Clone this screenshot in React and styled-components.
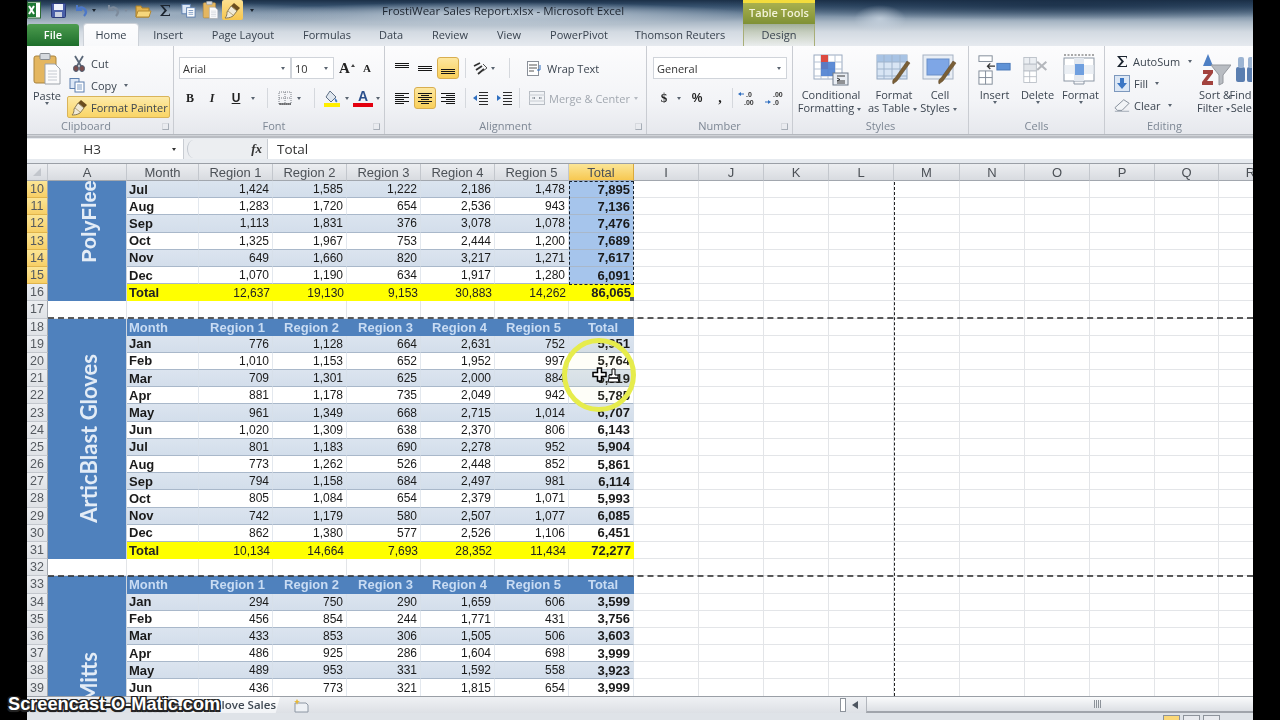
import React from "react";
import styled, { createGlobalStyle } from "styled-components";

const uiFont = `"Open Sans", "Noto Sans", "Liberation Sans", sans-serif`;
const cellFont = `"Liberation Sans", Arial, sans-serif`;

const GlobalStyle = createGlobalStyle`
  html, body { margin: 0; padding: 0; background: #000; overflow: hidden; }
  * { box-sizing: border-box; }
`;

const Page = styled.div`
  position: relative;
  width: 1280px;
  height: 720px;
  background: #000;
  overflow: hidden;
`;

const ExcelWindow = styled.div`
  position: relative;
  width: 1226px;
  height: 720px;
  margin-left: 27px;
  display: flex;
  flex-direction: column;
  overflow: hidden;
  filter: blur(0.35px);
  background:
    radial-gradient(ellipse 26px 14px at 853px 19px, rgba(205, 216, 228, 0.75), transparent),
    radial-gradient(ellipse 250px 12px at 470px 14px, rgba(214, 223, 232, 0.8), transparent),
    radial-gradient(ellipse 190px 11px at 140px 13px, rgba(196, 209, 222, 0.55), transparent),
    radial-gradient(ellipse 360px 15px at 1030px 5px, rgba(24, 44, 68, 0.75), transparent),
    linear-gradient(180deg, #1b2f47 0, #35506d 6px, #6f869d 14px, #a9b7c5 22px, #d3dae2 32px, #e6eaef 46px);
`;

const TitleBar = styled.div`
  height: 24px;
  display: flex;
  align-items: flex-start;
  flex-shrink: 0;
`;

const QuickAccess = styled.div`
  display: flex;
  align-items: center;
  width: 355px;
  height: 20px;
`;

const QuickButton = styled.span`
  display: flex;
  align-items: center;
  justify-content: center;
  height: 20px;
  width: ${(p) => p.$w || 16}px;
  margin-left: ${(p) => p.$ml || 0}px;
  flex-shrink: 0;
  ${(p) => p.$on && "background: linear-gradient(#fbdf8f, #f7c64e); border-radius: 2px;"}
`;

const WindowTitle = styled.div`
  width: 361px;
  padding-top: 3px;
  font: 11.5px ${uiFont};
  color: #1d2530;
  white-space: nowrap;
`;

const ContextTab = styled.div`
  width: 72px;
  height: 24px;
  border-top: 3px solid #f4dc3c;
  background: linear-gradient(#a9b04e, #7f9135);
  color: #f3f3d8;
  font: 600 11px/20px ${uiFont};
  text-align: center;
`;

const TabRow = styled.div`
  height: 22px;
  display: flex;
  flex-shrink: 0;
`;

const Tab = styled.div`
  width: ${(p) => p.$w}px;
  margin-left: ${(p) => p.$ml || 0}px;
  font: 11px/22px ${uiFont};
  color: #39434f;
  text-align: center;
`;

const FileTab = styled(Tab)`
  background: linear-gradient(#4d9c4f, #1d6e2b);
  color: #fff;
  font-weight: 600;
  border-radius: 3px 3px 0 0;
`;

const HomeTab = styled(Tab)`
  background: linear-gradient(#fdfdfe, #f8f9fb);
  border-radius: 3px 3px 0 0;
  box-shadow: 0 0 0 1px #ccd1d8;
`;

const DesignTab = styled(Tab)`
  background: linear-gradient(rgba(130, 145, 60, 0.35), rgba(240, 242, 235, 0.4));
  border-left: 1px solid #a8ae78;
  border-right: 1px solid #a8ae78;
`;

const Ribbon = styled.div`
  height: 89px;
  display: flex;
  flex-shrink: 0;
  background: linear-gradient(#fcfcfd, #f3f4f7 62%, #e6e8ed);
  border-bottom: 1px solid #b4b8be;
  box-shadow: 0 1px 0 #d0d3d8, 0 3px 0 #b9bcc2;
`;

const Group = styled.div`
  position: relative;
  width: ${(p) => p.$w}px;
  flex-shrink: 0;
  display: flex;
  flex-direction: column;
  border-right: 1px solid ${(p) => (p.$last ? "transparent" : "#c9ccd2")};
  overflow: hidden;
`;

const GroupBody = styled.div`
  height: 72px;
  display: flex;
  padding-left: ${(p) => p.$pl || 0}px;
  padding-top: ${(p) => p.$pt ?? 8}px;
  gap: ${(p) => p.$gap || 0}px;
`;

const GroupLabel = styled.div`
  font: 11px/16px ${uiFont};
  color: #7d8794;
  text-align: center;
  padding-right: ${(p) => p.$pr || 0}px;
`;

const Launcher = styled.span`
  position: absolute;
  right: 4px;
  bottom: 4px;
  width: 7px;
  height: 7px;
  border: 1px solid #a6adb6;
  border-top-color: #d6d9de;
  border-left-color: #d6d9de;
`;

const BigButton = styled.div`
  width: ${(p) => p.$w}px;
  display: flex;
  flex-direction: column;
  align-items: center;
  font: 11px/13px ${uiFont};
  color: #3c4550;
  text-align: center;
  white-space: nowrap;
  flex-shrink: 0;
`;

const BigIcon = styled.div`
  height: 33px;
  margin-bottom: 2px;
  margin-top: ${(p) => p.$mt || 0}px;
  display: flex;
  align-items: flex-end;
  justify-content: center;
`;

const PasteLabel = styled.span`
  margin-top: 2px;
`;

const Caret = styled.span`
  display: inline-block;
  width: 0;
  height: 0;
  margin: 0 ${(p) => p.$m ?? 3}px;
  vertical-align: middle;
  flex-shrink: 0;
  border-left: 2.5px solid transparent;
  border-right: 2.5px solid transparent;
  border-top: 3px solid ${(p) => p.$c || "#5a6470"};
`;

const UpCaret = styled.span`
  width: 0;
  height: 0;
  margin: -6px 0 0 1px;
  border-left: 2px solid transparent;
  border-right: 2px solid transparent;
  border-bottom: 3px solid #444;
`;

const SmallColumn = styled.div`
  display: flex;
  flex-direction: column;
  flex-shrink: 0;
  width: ${(p) => p.$w}px;
`;

const SmallButton = styled.div`
  height: 22px;
  display: flex;
  align-items: center;
  gap: ${(p) => p.$gap ?? 4}px;
  padding-left: ${(p) => p.$pl ?? 2}px;
  font: 11px ${uiFont};
  color: ${(p) => (p.$off ? "#a2a8b0" : "#3c4550")};
  white-space: nowrap;
  ${(p) =>
    p.$on &&
    "background: linear-gradient(#fdeaa8, #fad566); border: 1px solid #d9b45a; border-radius: 2px;"}
`;

const StackRows = styled.div`
  display: flex;
  flex-direction: column;
  gap: ${(p) => p.$gap ?? 8}px;
`;

const ToolRow = styled.div`
  display: flex;
  align-items: center;
  height: 22px;
  gap: ${(p) => p.$gap || 0}px;
`;

const Combo = styled.div`
  width: ${(p) => p.$w}px;
  height: 22px;
  flex-shrink: 0;
  background: #fff;
  border: 1px solid #d0d4da;
  display: flex;
  align-items: center;
  justify-content: space-between;
  padding: 0 2px 0 3px;
  font: 11px ${uiFont};
  color: #333;
`;

const ToolIcon = styled.span`
  display: flex;
  align-items: center;
  justify-content: center;
  width: ${(p) => p.$w || 22}px;
  height: 22px;
  font: ${(p) => p.$font || "700 12px 'Liberation Serif', serif"};
  color: #222;
  flex-shrink: 0;
  ${(p) =>
    p.$on &&
    "background: linear-gradient(#fde7a0, #f9cf5a); border: 1px solid #d8ae50; border-radius: 3px;"}
`;

const UnderlineIcon = styled(ToolIcon)`
  text-decoration: underline;
`;

const FontColorIcon = styled(ToolIcon)`
  color: #2b4f8c;
  height: 17px;
  border-bottom: 4px solid #e3000f;
`;

const RowDivider = styled.span`
  width: 1px;
  height: 20px;
  background: #d5d8dd;
  margin: 0 ${(p) => p.$m ?? 6}px;
  flex-shrink: 0;
`;

const FormulaBar = styled.div`
  height: 20px;
  margin-top: 4px;
  display: flex;
  flex-shrink: 0;
  background: #fff;
  font: 13.5px/20px ${uiFont};
  color: #333;
`;

const NameBox = styled.div`
  width: 156px;
  display: flex;
  align-items: center;
  justify-content: flex-end;
  gap: 68px;
  padding-right: 4px;
`;

const FormulaButtons = styled.div`
  width: 85px;
  display: flex;
  align-items: center;
  justify-content: space-between;
  padding: 0 5px 0 3px;
  background: #eceef1;
  border-right: 1px solid #c8ccd2;
  border-left: 1px solid #c8ccd2;
  font: italic 700 13px "Liberation Serif", serif;
`;

const RoundCap = styled.span`
  width: 12px;
  height: 18px;
  border-left: 1.5px solid #c4c9d0;
  border-radius: 50%;
`;

const FormulaText = styled.div`
  padding-left: 9px;
`;

const SheetArea = styled.div`
  position: relative;
  margin-top: 4px;
  height: 533px;
  flex-shrink: 0;
  overflow: hidden;
  background: #fff;
  border-top: 1px solid #9a9fa6;
`;

const Grid = styled.div`
  display: grid;
  grid-template-columns: 21px 79px 72px repeat(5, 74px) repeat(5, 65px) 66px 65px 65px 65px 64px 64px;
  grid-template-rows: 17px repeat(30, 17.2px);
  font: 12px ${cellFont};
  color: #111;
`;

const ColHead = styled.div`
  display: flex;
  align-items: center;
  justify-content: center;
  font: 13px ${cellFont};
  color: #4c5157;
  background: ${(p) =>
    p.$active
      ? "linear-gradient(#fbe596, #f7c851)"
      : "linear-gradient(#eceef1, #d8dbe0)"};
  border-right: 1px solid ${(p) => (p.$active ? "#d9a93c" : "#c3c7cd")};
  border-bottom: 1px solid #a2a7ae;
`;

const RowHead = styled.div`
  display: flex;
  align-items: center;
  justify-content: center;
  font: 12.5px ${cellFont};
  color: #555a60;
  background: ${(p) =>
    p.$active
      ? "linear-gradient(#fbe596, #f7cf66)"
      : "linear-gradient(#eceef1, #dfe2e6)"};
  border-bottom: 1px solid ${(p) => (p.$active ? "#e0b44c" : "#c3c7cd")};
  border-right: 1px solid #a2a7ae;
`;

const Band = styled.div`
  grid-row: span ${(p) => p.$span};
  background: #4f81bd;
  color: #e3ecf6;
  overflow: hidden;
  display: flex;
  flex-direction: column;
  align-items: center;
  justify-content: ${(p) => p.$justify || "center"};
  padding-top: ${(p) => p.$pt || 0}px;
  padding-bottom: ${(p) => p.$pb || 0}px;
  padding-left: 3px;
  border-right: 1px solid #cfd6df;
`;

const BandText = styled.span`
  writing-mode: vertical-rl;
  transform: rotate(180deg);
  white-space: nowrap;
  font: 700 ${(p) => p.$size}px/1 ${(p) => p.$font};
  flex-shrink: 0;
`;

const Cell = styled.div`
  display: flex;
  align-items: center;
  justify-content: ${(p) => (p.$left ? "flex-start" : "flex-end")};
  padding: ${(p) => (p.$left ? "0 0 0 2px" : "0 3px 0 0")};
  white-space: nowrap;
  border-right: 1px solid #e3e5e8;
  border-bottom: 1px solid #e3e5e8;
  font-size: ${(p) => (p.$strong ? "13px" : "12px")};
  font-weight: ${(p) => (p.$strong ? 700 : 400)};
`;

const DataCell = styled(Cell)`
  background: ${(p) =>
    p.$selected ? "#a6c5ec" : p.$shaded ? "linear-gradient(#dbe4ef, #d3deeb)" : "#fff"};
  border-bottom: 1px solid #a9b8ca;
  border-right: 1px solid ${(p) => (p.$shaded ? "#d7e0ea" : "#e3e8ee")};
  color: #1a1a1a;
`;

const HeaderCell = styled(Cell)`
  background: #4f81bd;
  color: #c9dcf3;
  font-size: 13px;
  font-weight: 700;
  padding-right: ${(p) => p.$pr || 8}px;
  border: 0;
`;

const TotalCell = styled(Cell)`
  background: #ffff00;
  border-right: 0;
  border-bottom: 0;
  color: #222;
  font-size: ${(p) => (p.$strong ? "13px" : "12px")};
`;

const PageBreakH = styled.div`
  position: absolute;
  left: 21px;
  right: 0;
  top: ${(p) => p.$top}px;
  border-top: 2px dashed #333;
  opacity: 0.8;
`;

const PageBreakV = styled.div`
  position: absolute;
  left: 867px;
  top: 18px;
  bottom: 0;
  border-left: 1.5px dashed #222;
`;

const MarchingAnts = styled.div`
  position: absolute;
  left: 542px;
  top: 17px;
  width: 65px;
  height: 104px;
  border: 1.5px dashed #14202e;
`;

const FillHandle = styled.span`
  position: absolute;
  left: 603px;
  top: 133px;
  width: 4px;
  height: 4px;
  background: #55606c;
`;

const Highlight = styled.div`
  position: absolute;
  left: 535px;
  top: 174px;
  width: 74px;
  height: 74px;
  border: 5px solid #e6ec4c;
  border-radius: 50%;
  background: rgba(240, 240, 130, 0.06);
`;

const CursorMark = styled.svg`
  position: absolute;
  left: 565px;
  top: 203px;
`;

const SheetBar = styled.div`
  height: 17px;
  flex-shrink: 0;
  display: flex;
  align-items: stretch;
  background: linear-gradient(#eff1f4, #dde0e5);
  border-top: 1px solid #9a9fa6;
`;

const SheetNav = styled.div`
  width: 145px;
`;

const SheetTab = styled.div`
  width: 108px;
  background: linear-gradient(#fff, #f1f3f6);
  font: 600 11.5px/15px ${uiFont};
  color: #3f4852;
  text-align: right;
  padding-right: 4px;
  clip-path: polygon(0 0, 100% 0, 96% 100%, 4% 100%);
`;

const NewSheetTab = styled.div`
  width: 40px;
  display: flex;
  align-items: center;
  justify-content: center;
`;

const SheetSpacer = styled.div`
  width: 520px;
`;

const SplitHandle = styled.span`
  width: 6px;
  margin: 1px 6px 1px 0;
  background: #fff;
  border: 1px solid #8d939b;
`;

const ScrollArrow = styled.span`
  width: 0;
  height: 0;
  align-self: center;
  margin-right: 8px;
  border-top: 4px solid transparent;
  border-bottom: 4px solid transparent;
  border-right: 6px solid #4d5560;
`;

const ScrollTrack = styled.div`
  flex: 1;
  display: flex;
  align-items: center;
  justify-content: center;
  padding-left: 76px;
  background: linear-gradient(#fafbfc, #dcdfe4);
  border-left: 1px solid #b2b6bd;
  border-bottom: 2px solid #a0a4ab;
`;

const ScrollGrip = styled.span`
  width: 8px;
  height: 8px;
  background: repeating-linear-gradient(90deg, #8c9299 0 1px, transparent 1px 2px);
`;

const StatusBar = styled.div`
  flex: 1;
  display: flex;
  justify-content: flex-end;
  align-items: flex-start;
  gap: 3px;
  padding: 2px 33px 0 0;
  background: #dfe3e8;
`;

const ViewButton = styled.span`
  width: 17px;
  height: 5px;
  border: 1px solid #8d939b;
  border-bottom: 0;
  background: ${(p) => (p.$on ? "#fbd878" : "#e8eaee")};
`;

const Watermark = styled.div`
  position: absolute;
  left: 8px;
  bottom: 5px;
  font: 700 18.2px ${cellFont};
  color: #fff;
  white-space: nowrap;
  text-shadow: -1.5px -1.5px 0 #222, 1.5px -1.5px 0 #222, -1.5px 1.5px 0 #222, 1.5px 1.5px 0 #222, 0 2px 1px #222;
`;

const ExcelLogo = () => (
  <svg width="14" height="18" viewBox="0 0 14 18">
    <rect x="0.5" y="1" width="13" height="16" fill="#fff" stroke="#2d6a35" />
    <rect x="1" y="2" width="8" height="14" fill="#1f7a35" />
    <path d="M2 5l5 8M7 5l-5 8" stroke="#fff" strokeWidth="2" />
  </svg>
);

const SaveIcon = () => (
  <svg width="15" height="15" viewBox="0 0 15 15">
    <rect x="0.5" y="0.5" width="14" height="14" rx="1" fill="#4a5fa8" stroke="#2b3a78" />
    <rect x="3" y="1" width="9" height="6" fill="#eef2fb" />
    <rect x="4" y="9" width="7" height="5" fill="#c9cfe0" />
  </svg>
);

const UndoIcon = ({ color }) => (
  <svg width="15" height="14" viewBox="0 0 15 14" fill="none">
    <path d="M4 2v5h5" stroke={color} strokeWidth="2" />
    <path d="M4.5 6.5C7 3 12 4 13 9c0 2-1 3-2 4" stroke={color} strokeWidth="2.4" />
  </svg>
);

const FolderIcon = () => (
  <svg width="17" height="15" viewBox="0 0 17 15">
    <path d="M1 3h5l1 2h7v9H1z" fill="#e2b34f" stroke="#a57c28" />
    <path d="M3 8h13l-2 6H1z" fill="#f6d67c" stroke="#b58a32" />
  </svg>
);

const SigmaGlyph = () => (
  <svg width="12" height="13" viewBox="0 0 12 13">
    <path d="M1 1h10v3l-1-2H4l4 4.500-4 4.500h6l1-2v3H1l4.500-5.500z" fill="#1c2530" />
  </svg>
);

const CopyIcon = ({ size = 16 }) => (
  <svg width={size} height={size} viewBox="0 0 16 16">
    <rect x="1" y="1.500" width="9" height="10" fill="#dce7f6" stroke="#5d7fae" />
    <rect x="6" y="5" width="9" height="10" fill="#fff" stroke="#5d7fae" />
    <path d="M8 8h5M8 10h5M8 12h5" stroke="#7f9cc4" />
  </svg>
);

const ClipboardIcon = ({ w = 18, h = 18 }) => (
  <svg width={w} height={h} viewBox="0 0 28 32">
    <rect x="1" y="3" width="22" height="27" rx="2" fill="#e4b660" stroke="#a8823c" />
    <rect x="7" y="0.500" width="10" height="6" rx="1" fill="#d5d9de" stroke="#878c92" />
    <path d="M12 11h10l5 5v15H12z" fill="#fbfbfc" stroke="#9da3ab" />
    <path d="M15 18h9M15 21h9M15 24h9M15 27h9" stroke="#c5cad1" />
  </svg>
);

const BrushIcon = () => (
  <svg width="17" height="17" viewBox="0 0 17 17">
    <path d="M10 1l6 5-3 3-6-5z" fill="#6b4d1e" />
    <path d="M7 4l6 5-4 5C6 16 3 16 1 16c2-2 2-4 2-6z" fill="#f0ead8" stroke="#8a7a55" />
    <path d="M4 9l5 4" stroke="#b9a777" />
  </svg>
);

const ScissorsIcon = () => (
  <svg width="14" height="17" viewBox="0 0 14 17" fill="none">
    <path d="M3 1l6 10M11 1L5 11" stroke="#5a6778" strokeWidth="1.800" />
    <ellipse cx="4" cy="13.500" rx="2.500" ry="3" fill="#7a4d4d" stroke="#4d5c70" />
    <ellipse cx="10" cy="13.500" rx="2.500" ry="3" fill="#7a4d4d" stroke="#4d5c70" />
  </svg>
);

const LinesIcon = ({ rows }) => (
  <svg width="16" height="14" viewBox="0 0 16 14" stroke="#161616" strokeWidth="1">
    {rows.map(([a, b, y]) => (
      <path key={y} d={`M${a} ${y + 0.5}H${b}`} />
    ))}
  </svg>
);

const alignLeft = [[1, 15, 2], [1, 10, 4], [1, 15, 6], [1, 10, 8], [1, 15, 10], [1, 10, 12]];
const alignCenter = [[1, 15, 2], [4, 12, 4], [1, 15, 6], [4, 12, 8], [1, 15, 10], [4, 12, 12]];
const alignRight = [[1, 15, 2], [6, 15, 4], [1, 15, 6], [6, 15, 8], [1, 15, 10], [6, 15, 12]];
const valignTop = [[1, 15, 2], [1, 15, 4], [1, 15, 6]];
const valignMid = [[1, 15, 5], [1, 15, 7], [1, 15, 9]];
const valignBottom = [[1, 15, 8], [1, 15, 10], [1, 15, 12]];

const IndentIcon = ({ flip }) => (
  <svg width="17" height="14" viewBox="0 0 17 14">
    <path d="M7 1.500h9M7 4.500h9M7 7.500h9M7 10.500h9M7 13.500h9" stroke="#2b2b2b" />
    <path d={flip ? "M1 4l4 3-4 3z" : "M5 4L1 7l4 3z"} fill="#2f6fc0" />
  </svg>
);

const BorderIcon = () => (
  <svg width="14" height="14" viewBox="0 0 14 14" fill="none" stroke="#7a7f86" strokeDasharray="1 1">
    <rect x="1" y="1" width="12" height="12" />
    <path d="M7 1v12M1 7h12" />
    <path d="M1 13h12" strokeDasharray="none" stroke="#222" />
  </svg>
);

const FillIcon = () => (
  <svg width="18" height="17" viewBox="0 0 18 17">
    <path d="M7 1l6 6-5 5-5-5z" fill="#dfe6ee" stroke="#5f6f85" />
    <path d="M12 8c2 2 3 3 2 4s-3-1-2-4z" fill="#4c7fc0" />
    <rect x="1" y="13" width="16" height="4" fill="#ffee00" />
  </svg>
);

const OrientIcon = () => (
  <svg width="17" height="14" viewBox="0 0 17 14" fill="none">
    <path d="M2 5l6-3M4 9l6-4M6 13l6-5" stroke="#333" strokeWidth="1.800" />
    <path d="M11 3l4 4-4 3" stroke="#555" />
  </svg>
);

const WrapIcon = () => (
  <svg width="16" height="15" viewBox="0 0 16 15" fill="none">
    <rect x="0.500" y="0.500" width="11" height="14" fill="#fff" stroke="#8a9099" />
    <path d="M2 4h8M2 7h8M2 10h5" stroke="#555" />
    <path d="M13 4v5h-3" stroke="#2f6fc0" />
  </svg>
);

const MergeIcon = () => (
  <svg width="16" height="14" viewBox="0 0 16 14" fill="none">
    <rect x="0.500" y="0.500" width="15" height="13" fill="#f1f3f6" stroke="#b7bcc3" />
    <path d="M0 4h16M0 10h16" stroke="#c8ccd2" />
    <path d="M3 7h3M13 7h-3M5 6l1 1-1 1M11 6l-1 1 1 1" stroke="#8d949d" />
  </svg>
);

const DecimalIcon = ({ top, bottom, up }) => (
  <svg width="22" height="16" viewBox="0 0 22 16" fontFamily="Liberation Sans" fontSize="7" fontWeight="700" fill="#333">
    <text x="9" y="7">{top}</text>
    <text x={up ? 7 : 9} y="15">{bottom}</text>
    <path d={up ? "M1 4l3-2v1.500h3v1H4V6z" : "M7 12l-3-2v1.500H1v1h3V14z"} fill="#2f6fc0" />
  </svg>
);

const TableGlyph = ({ children, w = 36, h = 32 }) => (
  <svg width={w} height={h} viewBox="0 0 36 32" fill="none">
    {children}
  </svg>
);

const gridLines = (
  <path d="M1 8h30M1 15h30M1 22h30M8 1v24M16 1v24M24 1v24" stroke="#9fb4cd" />
);

const FormatTableIcon = () => (
  <TableGlyph>
    <rect x="1" y="1" width="30" height="24" fill="#d8e5f4" stroke="#92a7c2" />
    <rect x="1" y="1" width="30" height="7" fill="#a8c3e4" />
    {gridLines}
    <path d="M34 9L21 27l-4 3c-1-3 0-5 2-6L31 7z" fill="#7a5f36" stroke="#5a4526" strokeWidth="0.500" />
  </TableGlyph>
);

const CellStylesIcon = () => (
  <TableGlyph>
    <rect x="1" y="1" width="30" height="24" fill="#e9eef5" stroke="#a5b2c3" />
    <rect x="5" y="5" width="22" height="16" fill="#7ea6e6" stroke="#6a8fc9" />
    <path d="M34 9L21 27l-4 3c-1-3 0-5 2-6L31 7z" fill="#7a5f36" stroke="#5a4526" strokeWidth="0.500" />
  </TableGlyph>
);

const CondFormatIcon = () => (
  <TableGlyph>
    <rect x="1" y="1" width="28" height="24" fill="#fff" stroke="#9aaac0" />
    <path d="M1 8h28M1 15h28M1 22h28M8 1v24M15 1v24M22 1v24" stroke="#b5c2d4" />
    <rect x="8" y="1" width="7" height="14" fill="#dc4a40" />
    <rect x="8" y="8" width="14" height="14" fill="#4d7fd0" opacity="0.9" />
    <rect x="8" y="1" width="7" height="7" fill="#dc4a40" />
    <rect x="20" y="19" width="15" height="12" fill="#e9edf3" stroke="#6e7a89" />
    <path d="M24 22h8M24 24l3 1.500-3 1.500h8M24 29h8" stroke="#222" fill="none" strokeWidth="0.900" />
  </TableGlyph>
);

const InsertCellsIcon = () => (
  <TableGlyph w={34}>
    <rect x="1" y="1" width="14" height="6" fill="#fff" stroke="#7f8a97" />
    <rect x="1" y="17" width="14" height="14" fill="#fff" stroke="#7f8a97" />
    <path d="M8 17v14M1 24h14" stroke="#7f8a97" />
    <rect x="20" y="9" width="14" height="7" fill="#5f92d6" stroke="#4a78b8" />
    <path d="M18 12H10m3-3l-3 3 3 3" stroke="#333" strokeWidth="1.300" />
  </TableGlyph>
);

const DeleteCellsIcon = () => (
  <TableGlyph w={30}>
    <rect x="1" y="1" width="15" height="8" fill="#eceff3" stroke="#b5bbc3" />
    <rect x="1" y="17" width="15" height="14" fill="#fff" stroke="#b5bbc3" />
    <path d="M8 1v8M8 17v14M1 24h15" stroke="#b5bbc3" />
    <rect x="1" y="9" width="15" height="8" fill="#e2e5e9" stroke="#b5bbc3" />
    <path d="M17 6l11 10m0-10L17 16" stroke="#b4b7bc" strokeWidth="2.500" />
  </TableGlyph>
);

const FormatCellsIcon = () => (
  <TableGlyph>
    <rect x="1" y="4" width="30" height="23" fill="#fff" stroke="#8c97a5" />
    <path d="M1 1h30" stroke="#555" strokeDasharray="2 1.500" />
    <rect x="11" y="4" width="10" height="23" fill="#e3e8ef" />
    <rect x="1" y="11" width="30" height="9" fill="#e3e8ef" opacity="0.7" />
    <rect x="12" y="10" width="9" height="11" fill="#6f9fdf" />
    <path d="M11 27v3h10v-3" stroke="#8c97a5" />
  </TableGlyph>
);

const SortIcon = () => (
  <svg width="32" height="33" viewBox="0 0 32 33">
    <path d="M9 1l5 12H4z" fill="#4d7fc4" />
    <path d="M4 17h10v3l-6 8h6v4H3v-3l6-8H4z" fill="#a2423e" />
    <path d="M12 12h20L24 22v8l-4 2V22z" fill="#b8bcc2" stroke="#94989e" />
  </svg>
);

const FindIcon = () => (
  <svg width="24" height="33" viewBox="0 0 24 33">
    <rect x="2" y="14" width="9" height="15" rx="2" fill="#5a7eb0" />
    <rect x="13" y="14" width="9" height="15" rx="2" fill="#5a7eb0" />
    <rect x="4" y="4" width="6" height="11" rx="2" fill="#9cb4d2" />
    <rect x="14" y="4" width="6" height="11" rx="2" fill="#9cb4d2" />
  </svg>
);

const FillDownIcon = () => (
  <svg width="16" height="17" viewBox="0 0 16 17">
    <rect x="0.500" y="0.500" width="15" height="16" fill="#dce7f5" stroke="#7d98bd" />
    <path d="M6 3h4v5h3l-5 6-5-6h3z" fill="#3b76c4" />
  </svg>
);

const EraserIcon = () => (
  <svg width="16" height="15" viewBox="0 0 18 15" fill="none">
    <path d="M11 1l6 4-8 8H4L1 10z" fill="#f2f4f7" stroke="#7b8592" />
    <path d="M1 14h16" stroke="#9aa3ae" />
  </svg>
);

const NewSheetIcon = () => (
  <svg width="17" height="15" viewBox="0 0 17 15">
    <path d="M3 5h11l2 2v7H3z" fill="#eef1f5" stroke="#8c96a3" />
    <path d="M5 1l1 2 2 .500-2 .800L5 7 4 4.300 2 3.500 4 3z" fill="#e8b834" />
  </svg>
);

const columns = ["A", "Month", "Region 1", "Region 2", "Region 3", "Region 4", "Region 5", "Total", "I", "J", "K", "L", "M", "N", "O", "P", "Q", "R"];

const polyFleece = [
  ["Jul", "1,424", "1,585", "1,222", "2,186", "1,478", "7,895"],
  ["Aug", "1,283", "1,720", "654", "2,536", "943", "7,136"],
  ["Sep", "1,113", "1,831", "376", "3,078", "1,078", "7,476"],
  ["Oct", "1,325", "1,967", "753", "2,444", "1,200", "7,689"],
  ["Nov", "649", "1,660", "820", "3,217", "1,271", "7,617"],
  ["Dec", "1,070", "1,190", "634", "1,917", "1,280", "6,091"],
];

const gloves = [
  ["Jan", "776", "1,128", "664", "2,631", "752", "5,951"],
  ["Feb", "1,010", "1,153", "652", "1,952", "997", "5,764"],
  ["Mar", "709", "1,301", "625", "2,000", "884", "5,519"],
  ["Apr", "881", "1,178", "735", "2,049", "942", "5,785"],
  ["May", "961", "1,349", "668", "2,715", "1,014", "6,707"],
  ["Jun", "1,020", "1,309", "638", "2,370", "806", "6,143"],
  ["Jul", "801", "1,183", "690", "2,278", "952", "5,904"],
  ["Aug", "773", "1,262", "526", "2,448", "852", "5,861"],
  ["Sep", "794", "1,158", "684", "2,497", "981", "6,114"],
  ["Oct", "805", "1,084", "654", "2,379", "1,071", "5,993"],
  ["Nov", "742", "1,179", "580", "2,507", "1,077", "6,085"],
  ["Dec", "862", "1,380", "577", "2,526", "1,106", "6,451"],
];

const mitts = [
  ["Jan", "294", "750", "290", "1,659", "606", "3,599"],
  ["Feb", "456", "854", "244", "1,771", "431", "3,756"],
  ["Mar", "433", "853", "306", "1,505", "506", "3,603"],
  ["Apr", "486", "925", "286", "1,604", "698", "3,999"],
  ["May", "489", "953", "331", "1,592", "558", "3,923"],
  ["Jun", "436", "773", "321", "1,815", "654", "3,999"],
];

const headerRow = ["Month", "Region 1", "Region 2", "Region 3", "Region 4", "Region 5", "Total"];

const EmptyCells = () =>
  Array.from({ length: 10 }, (_, i) => <Cell key={"e" + i} />);

const HeaderRow = ({ row, band }) => (
  <>
    <RowHead>{row}</RowHead>
    {band}
    {headerRow.map((h, i) => (
      <HeaderCell key={h} $left={i === 0} $pr={i === 6 ? 16 : 8}>{h}</HeaderCell>
    ))}
    <EmptyCells />
  </>
);

const DataRow = ({ row, values, shaded, active, band }) => (
  <>
    <RowHead $active={active}>{row}</RowHead>
    {band}
    {values.map((v, i) => (
      <DataCell
        key={i}
        $left={i === 0}
        $strong={i === 0 || i === 6}
        $shaded={shaded}
        $selected={active && i === 6}
      >
        {v}
      </DataCell>
    ))}
    <EmptyCells />
  </>
);

const TotalRow = ({ row, values }) => (
  <>
    <RowHead>{row}</RowHead>
    {values.map((v, i) => (
      <TotalCell key={i} $left={i === 0} $strong={i === 0 || i === 6}>
        {v}
      </TotalCell>
    ))}
    <EmptyCells />
  </>
);

const BlankRow = ({ row }) => (
  <>
    <RowHead>{row}</RowHead>
    {Array.from({ length: 8 }, (_, i) => <Cell key={"b" + i} />)}
    <EmptyCells />
  </>
);

const Sheet = () => (
  <SheetArea>
    <Grid>
      <ColHead>
        <svg width="10" height="10" viewBox="0 0 10 10"><path d="M9 1v8H1z" fill="#c2c6cc" /></svg>
      </ColHead>
      {columns.map((c) => (
        <ColHead key={c} $active={c === "Total"}>{c}</ColHead>
      ))}

      {polyFleece.map((values, i) => (
        <DataRow
          key={values[0]}
          row={10 + i}
          values={values}
          shaded={i % 2 === 0}
          active
          band={
            i === 0 && (
              <Band $span={7} $justify="flex-end" $pb={39}>
                <BandText $size={20} $font={cellFont}>PolyFleece</BandText>
              </Band>
            )
          }
        />
      ))}
      <TotalRow row={16} values={["Total", "12,637", "19,130", "9,153", "30,883", "14,262", "86,065"]} />
      <BlankRow row={17} />

      <HeaderRow
        row={18}
        band={
          <Band $span={14}>
            <BandText $size={22} $font={`"Lato", "Open Sans", sans-serif`}>ArticBlast Gloves</BandText>
          </Band>
        }
      />
      {gloves.map((values, i) => (
        <DataRow key={values[0]} row={19 + i} values={values} shaded={i % 2 === 0} />
      ))}
      <TotalRow row={31} values={["Total", "10,134", "14,664", "7,693", "28,352", "11,434", "72,277"]} />
      <BlankRow row={32} />

      <HeaderRow
        row={33}
        band={
          <Band $span={7} $justify="flex-start" $pt={76}>
            <BandText $size={22} $font={`"Lato", "Open Sans", sans-serif`}>Mitts</BandText>
          </Band>
        }
      />
      {mitts.map((values, i) => (
        <DataRow key={values[0]} row={34 + i} values={values} shaded={i % 2 === 0} />
      ))}
    </Grid>

    <PageBreakH $top={153} />
    <PageBreakH $top={411} />
    <PageBreakV />
    <MarchingAnts />
    <FillHandle />
    <Highlight />
    <CursorMark width="30" height="18" viewBox="0 0 30 18">
      <path d="M5.500 1h4v4.500H14v4H9.500V14h-4V9.500H1v-4h4.500z" fill="#fff" stroke="#000" strokeWidth="1.500" />
      <path d="M20 2h3v6h3v3h-9V8h3zM17 11h9l1 4H16z" fill="#fff" stroke="#000" />
    </CursorMark>
  </SheetArea>
);

const RibbonBar = () => (
  <Ribbon>
    <Group $w={147}>
      <GroupBody $pl={3} $pt={6} $gap={3}>
        <BigButton $w={34}>
          <BigIcon><ClipboardIcon w={28} h={32} /></BigIcon>
          <PasteLabel>Paste</PasteLabel>
          <Caret />
        </BigButton>
        <SmallColumn $w={103}>
          <SmallButton $pl={5} $gap={5}><ScissorsIcon />Cut</SmallButton>
          <SmallButton $pl={2} $gap={6}><CopyIcon />Copy<Caret $m={1} /></SmallButton>
          <SmallButton $on $pl={3} $gap={3}><BrushIcon />Format Painter</SmallButton>
        </SmallColumn>
      </GroupBody>
      <GroupLabel $pr={28}>Clipboard</GroupLabel>
      <Launcher />
    </Group>

    <Group $w={211}>
      <GroupBody $pl={5} $pt={11}>
        <StackRows>
          <ToolRow>
            <Combo $w={112}>Arial<Caret /></Combo>
            <Combo $w={43}>10<Caret /></Combo>
            <ToolIcon $w={26} $font="700 15px 'Liberation Serif', serif">A<UpCaret /></ToolIcon>
            <ToolIcon $w={14} $font="700 11px 'Liberation Serif', serif">A</ToolIcon>
          </ToolRow>
          <ToolRow>
            <ToolIcon>B</ToolIcon>
            <ToolIcon $font="italic 700 12px 'Liberation Serif', serif">I</ToolIcon>
            <UnderlineIcon $w={26} $font="700 12px 'Liberation Sans', sans-serif">U</UnderlineIcon>
            <Caret $m={2} />
            <RowDivider $m={10} />
            <BorderIcon />
            <Caret $m={5} />
            <RowDivider $m={8} />
            <FillIcon />
            <Caret $m={4} />
            <FontColorIcon $w={20} $font="700 14px 'Liberation Sans', sans-serif">A</FontColorIcon>
            <Caret $m={3} />
          </ToolRow>
        </StackRows>
      </GroupBody>
      <GroupLabel $pr={10}>Font</GroupLabel>
      <Launcher />
    </Group>

    <Group $w={262}>
      <GroupBody $pl={6} $pt={11}>
        <StackRows>
          <ToolRow $gap={1}>
            <ToolIcon $w={22}><LinesIcon rows={valignTop} /></ToolIcon>
            <ToolIcon $w={22}><LinesIcon rows={valignMid} /></ToolIcon>
            <ToolIcon $w={22} $on><LinesIcon rows={valignBottom} /></ToolIcon>
            <RowDivider $m={5} />
            <OrientIcon />
            <Caret $m={1} />
            <RowDivider $m={12} />
            <SmallButton $pl={4}><WrapIcon />Wrap Text</SmallButton>
          </ToolRow>
          <ToolRow $gap={1}>
            <ToolIcon $w={22}><LinesIcon rows={alignLeft} /></ToolIcon>
            <ToolIcon $w={22} $on><LinesIcon rows={alignCenter} /></ToolIcon>
            <ToolIcon $w={22}><LinesIcon rows={alignRight} /></ToolIcon>
            <RowDivider $m={5} />
            <IndentIcon />
            <ToolIcon $w={5} />
            <IndentIcon flip />
            <RowDivider $m={5} />
            <SmallButton $off $pl={3}><MergeIcon />Merge &amp; Center<Caret $c="#b5bac1" $m={0} /></SmallButton>
          </ToolRow>
        </StackRows>
      </GroupBody>
      <GroupLabel $pr={20}>Alignment</GroupLabel>
      <Launcher />
    </Group>

    <Group $w={146}>
      <GroupBody $pl={6} $pt={11}>
        <StackRows>
          <Combo $w={134}>General<Caret /></Combo>
          <ToolRow>
            <ToolIcon $w={22} $font="700 13px 'Liberation Serif', serif">$</ToolIcon>
            <Caret $m={2} />
            <ToolIcon $w={28} $font="700 12px 'Liberation Sans', sans-serif">%</ToolIcon>
            <ToolIcon $w={18} $font="700 14px 'Liberation Serif', serif">,</ToolIcon>
            <RowDivider $m={3} />
            <ToolIcon $w={24}><DecimalIcon top=".0" bottom=".00" up /></ToolIcon>
            <ToolIcon $w={30}><DecimalIcon top=".00" bottom=".0" /></ToolIcon>
          </ToolRow>
        </StackRows>
      </GroupBody>
      <GroupLabel>Number</GroupLabel>
      <Launcher />
    </Group>

    <Group $w={176}>
      <GroupBody $pl={2} $pt={7}>
        <BigButton $w={72}>
          <BigIcon><CondFormatIcon /></BigIcon>
          <span>Conditional</span>
          <span>Formatting<Caret /></span>
        </BigButton>
        <BigButton $w={54}>
          <BigIcon><FormatTableIcon /></BigIcon>
          <span>Format</span>
          <span>as Table<Caret /></span>
        </BigButton>
        <BigButton $w={38}>
          <BigIcon><CellStylesIcon /></BigIcon>
          <span>Cell</span>
          <span>Styles<Caret /></span>
        </BigButton>
      </GroupBody>
      <GroupLabel>Styles</GroupLabel>
    </Group>

    <Group $w={136}>
      <GroupBody $pl={4} $pt={7}>
        <BigButton $w={43}>
          <BigIcon><InsertCellsIcon /></BigIcon>
          <span>Insert</span>
          <Caret />
        </BigButton>
        <BigButton $w={43}>
          <BigIcon><DeleteCellsIcon /></BigIcon>
          <span>Delete</span>
          <Caret />
        </BigButton>
        <BigButton $w={43}>
          <BigIcon><FormatCellsIcon /></BigIcon>
          <span>Format</span>
          <Caret />
        </BigButton>
      </GroupBody>
      <GroupLabel>Cells</GroupLabel>
    </Group>

    <Group $w={148} $last>
      <GroupBody $pl={8} $pt={4}>
        <SmallColumn $w={84}>
          <SmallButton $pl={3} $gap={5}><SigmaGlyph />AutoSum<Caret /></SmallButton>
          <SmallButton $pl={1} $gap={4}><FillDownIcon />Fill<Caret /></SmallButton>
          <SmallButton $pl={1} $gap={4}><EraserIcon />Clear<Caret /></SmallButton>
        </SmallColumn>
        <BigButton $w={36}>
          <BigIcon $mt={3}><SortIcon /></BigIcon>
          <span>Sort &amp;</span>
          <span>Filter<Caret /></span>
        </BigButton>
        <BigButton $w={26}>
          <BigIcon $mt={3}><FindIcon /></BigIcon>
          <span>Find &amp;</span>
          <span>Select</span>
        </BigButton>
      </GroupBody>
      <GroupLabel $pr={28}>Editing</GroupLabel>
    </Group>
  </Ribbon>
);

export default function App() {
  return (
    <Page>
      <GlobalStyle />
      <ExcelWindow>
        <TitleBar>
          <QuickAccess>
            <ExcelLogo />
            <QuickButton $ml={9}><SaveIcon /></QuickButton>
            <QuickButton $ml={6} $w={17}><UndoIcon color="#4c78c8" /></QuickButton>
            <Caret $c="#1c2530" />
            <QuickButton $ml={4} $w={18}><UndoIcon color="#7d8b9c" /></QuickButton>
            <Caret $c="#7d8b9c" />
            <QuickButton $ml={3} $w={19}><FolderIcon /></QuickButton>
            <QuickButton $ml={5} $w={14}><SigmaGlyph /></QuickButton>
            <QuickButton $ml={8}><CopyIcon size={15} /></QuickButton>
            <QuickButton $ml={6} $w={17}><ClipboardIcon /></QuickButton>
            <QuickButton $ml={3} $w={21} $on><BrushIcon /></QuickButton>
            <Caret $c="#1c2530" $m={7} />
          </QuickAccess>
          <WindowTitle>FrostiWear Sales Report.xlsx  -  Microsoft Excel</WindowTitle>
          <ContextTab>Table Tools</ContextTab>
        </TitleBar>

        <TabRow>
          <FileTab $w={52}>File</FileTab>
          <HomeTab $w={54} $ml={5}>Home</HomeTab>
          <Tab $w={60}>Insert</Tab>
          <Tab $w={90}>Page Layout</Tab>
          <Tab $w={78}>Formulas</Tab>
          <Tab $w={50}>Data</Tab>
          <Tab $w={68}>Review</Tab>
          <Tab $w={50}>View</Tab>
          <Tab $w={90}>PowerPivot</Tab>
          <Tab $w={112}>Thomson Reuters</Tab>
          <DesignTab $w={72} $ml={7}>Design</DesignTab>
        </TabRow>

        <RibbonBar />

        <FormulaBar>
          <NameBox>H3<Caret $c="#333" /></NameBox>
          <FormulaButtons>
            <RoundCap />
            <span>fx</span>
          </FormulaButtons>
          <FormulaText>Total</FormulaText>
        </FormulaBar>

        <Sheet />

        <SheetBar>
          <SheetNav />
          <SheetTab>Glove Sales</SheetTab>
          <NewSheetTab><NewSheetIcon /></NewSheetTab>
          <SheetSpacer />
          <SplitHandle />
          <ScrollArrow />
          <ScrollTrack><ScrollGrip /></ScrollTrack>
        </SheetBar>
        <StatusBar>
          <ViewButton $on />
          <ViewButton />
          <ViewButton />
        </StatusBar>
      </ExcelWindow>
      <Watermark>Screencast-O-Matic.com</Watermark>
    </Page>
  );
}
